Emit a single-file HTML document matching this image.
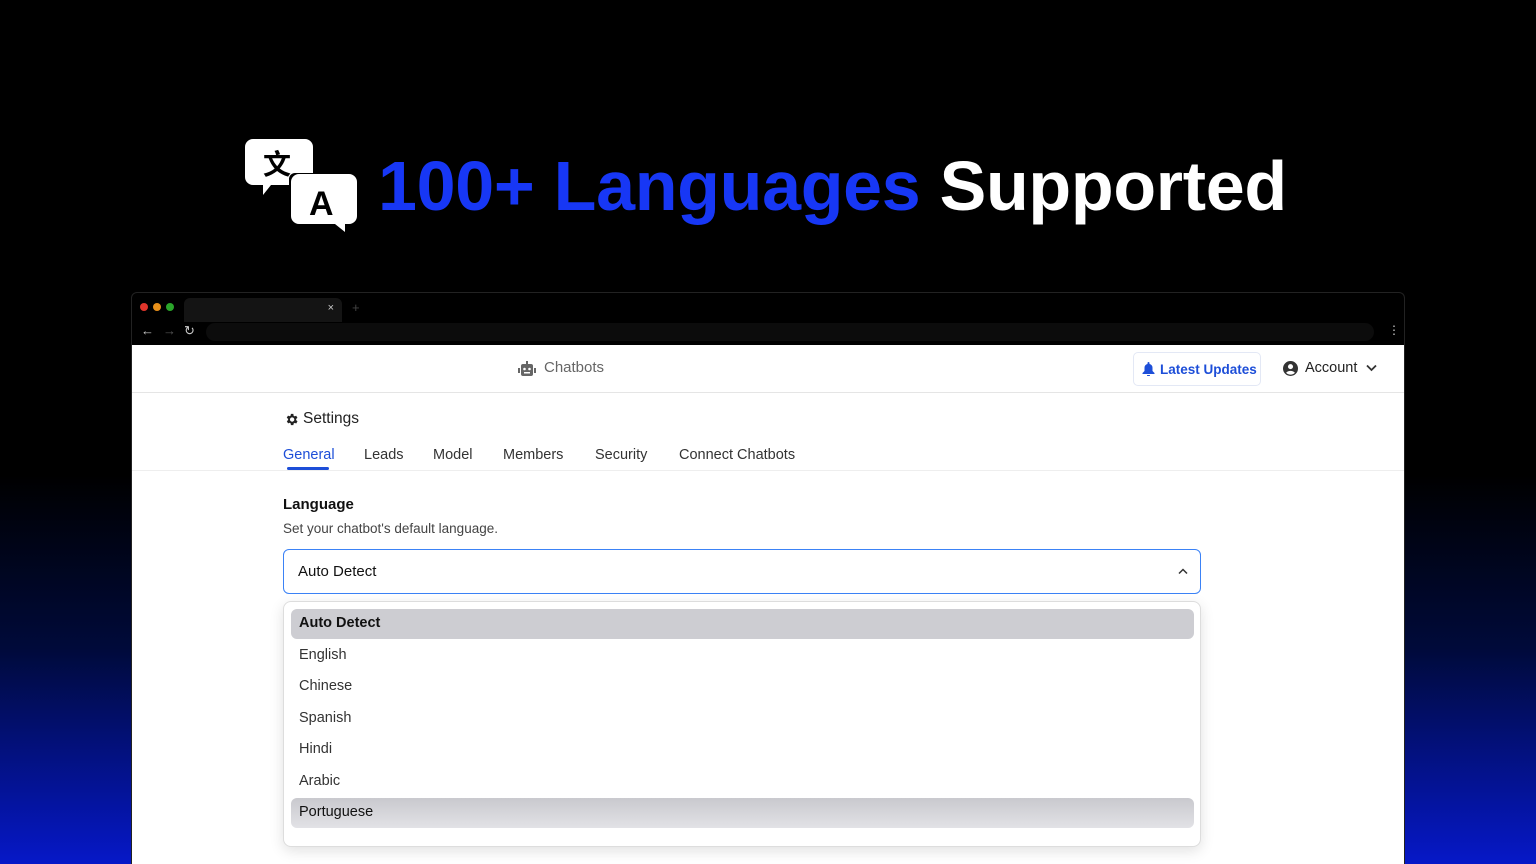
<!DOCTYPE html>
<html><head><style>
*{margin:0;padding:0;box-sizing:border-box}
html,body{width:1536px;height:864px;overflow:hidden}
body{font-family:"Liberation Sans",sans-serif;background:linear-gradient(180deg,#000 0%,#000 55%,#000a3a 75%,#0618c8 100%);position:relative}
.h{position:absolute;left:378px;top:146px;font-size:70px;font-weight:bold;letter-spacing:-0.3px;color:#fff;white-space:nowrap;line-height:80px}
.h b{color:#1737f5}
.win{position:absolute;left:131px;top:292px;width:1274px;height:572px;background:#000;border:1px solid #222;border-bottom:none;border-radius:6px 6px 0 0;overflow:hidden}
.tab{position:absolute;left:52px;top:5px;width:158px;height:24px;background:#141414;border-radius:6px 6px 0 0}
.dot{position:absolute;top:10px;width:8px;height:8px;border-radius:50%}
.addr{position:absolute;left:74px;top:30px;width:1168px;height:18px;background:#0c0c0c;border-radius:9px}
.page{position:absolute;left:0;top:52px;width:1274px;height:530px;background:#fff}
.top{height:48px;border-bottom:1px solid #e5e5e5;position:relative}
.t{position:absolute;font-size:15px;color:#222;white-space:nowrap}
.tabs span{position:absolute;top:102px;font-size:14.5px;color:#333}
.sel{position:absolute;left:151px;top:204px;width:918px;height:45px;border:1.5px solid #3b82f6;border-radius:6px;font-size:15px;color:#111;padding:13px 14px}
.dd{position:absolute;left:151px;top:256px;width:918px;height:246px;border:1px solid #ddd;border-radius:8px;box-shadow:0 4px 14px rgba(0,0,0,.12);background:#fff}
.it{position:absolute;left:7px;width:903px;height:30px;font-size:14.5px;color:#333;padding:6px 8px;border-radius:6px}
</style></head><body>
<svg style="position:absolute;left:245px;top:138px" width="112" height="94" viewBox="0 0 112 94">
<path d="M8 1h52a8 8 0 0 1 8 8v26H50a6 6 0 0 0-6 6v6H26l-8 10v-10H8a8 8 0 0 1-8-8V9a8 8 0 0 1 8-8z" fill="#fff"/>
<text x="18" y="36" font-size="28" font-weight="bold" fill="#000" font-family="Noto Sans CJK SC,sans-serif">文</text>
<path d="M54 36h50a8 8 0 0 1 8 8v34a8 8 0 0 1-8 8h-4v8l-10-8H54a8 8 0 0 1-8-8V44a8 8 0 0 1 8-8z" fill="#fff"/>
<text x="64" y="77" font-size="34" font-weight="bold" fill="#000" font-family="Liberation Sans,sans-serif">A</text>
</svg>
<div class="h"><b>100+ Languages</b> Supported</div>
<div class="win">
<div class="dot" style="left:8px;background:#e0352b"></div><div class="dot" style="left:21px;background:#e8901a"></div><div class="dot" style="left:34px;background:#2aa52a"></div>
<div class="tab"><span style="position:absolute;right:8px;top:4px;color:#ccc;font-size:11px">×</span></div>
<span style="position:absolute;left:220px;top:7px;color:#444;font-size:13px">+</span>
<span style="position:absolute;left:9px;top:30px;color:#ccc;font-size:13px">←</span>
<span style="position:absolute;left:31px;top:30px;color:#555;font-size:13px">→</span>
<span style="position:absolute;left:52px;top:30px;color:#ccc;font-size:13px">↻</span>
<div class="addr"></div>
<span style="position:absolute;left:1256px;top:30px;color:#ccc;font-size:12px">⋮</span>
<div class="page">
<div class="top">
<svg style="position:absolute;left:386px;top:16px" width="18" height="16" viewBox="0 0 18 16"><rect x="3" y="3" width="12" height="12" rx="2" fill="#666"/><rect x="0" y="7" width="2" height="5" fill="#666"/><rect x="16" y="7" width="2" height="5" fill="#666"/><rect x="8" y="0" width="2" height="3" fill="#666"/><circle cx="6.5" cy="8" r="1.3" fill="#fff"/><circle cx="11.5" cy="8" r="1.3" fill="#fff"/><rect x="6" y="11" width="6" height="1.5" fill="#fff"/></svg>
<span class="t" style="left:412px;top:14px;color:#666">Chatbots</span>
<div style="position:absolute;left:1001px;top:7px;width:128px;height:34px;border:1px solid #e3e8f5;border-radius:5px;color:#1d4ed8;font-size:13.5px;font-weight:bold;padding:9px 0 0 26px;white-space:nowrap">Latest Updates
<svg style="position:absolute;left:8px;top:9px" width="13" height="14" viewBox="0 0 13 14"><path d="M6.5 0a1 1 0 0 1 1 1v1a4 4 0 0 1 3 4v3l2 2v1H.5v-1l2-2V6a4 4 0 0 1 3-4V1a1 1 0 0 1 1-1zM5 13h3a1.5 1.5 0 0 1-3 0z" fill="#1d4ed8"/></svg></div>
<svg style="position:absolute;left:1151px;top:16px" width="15" height="15" viewBox="0 0 16 16"><circle cx="8" cy="8" r="8" fill="#333"/><circle cx="8" cy="6" r="2.7" fill="#fff"/><path d="M3.3 12.5a5.5 4 0 0 1 9.4 0A6.5 6.5 0 0 1 3.3 12.5z" fill="#fff"/></svg>
<span class="t" style="left:1173px;top:15px;font-size:14.5px">Account</span>
<svg style="position:absolute;left:1234px;top:19px" width="11" height="8" viewBox="0 0 11 8"><path d="M1 1.5l4.5 4.5 4.5-4.5" stroke="#333" stroke-width="1.8" fill="none"/></svg>
</div>
<svg style="position:absolute;left:152px;top:67px" width="15" height="15" viewBox="0 0 24 24"><path fill="#222" d="M19.4 13a7.6 7.6 0 0 0 0-2l2.1-1.6-2-3.5-2.5 1a7.5 7.5 0 0 0-1.7-1L15 3h-4l-.4 2.7a7.5 7.5 0 0 0-1.7 1l-2.5-1-2 3.5L6.6 11a7.6 7.6 0 0 0 0 2l-2.1 1.6 2 3.5 2.5-1a7.5 7.5 0 0 0 1.7 1L11 21h4l.4-2.7a7.5 7.5 0 0 0 1.7-1l2.5 1 2-3.5zM13 15.5a3.5 3.5 0 1 1 0-7 3.5 3.5 0 0 1 0 7z"/></svg>
<span class="t" style="left:171px;top:65px;font-size:15.5px">Settings</span>
<div class="tabs"><span style="left:151px;color:#1d4ed8">General</span><span style="left:232px">Leads</span><span style="left:301px">Model</span><span style="left:371px">Members</span><span style="left:463px">Security</span><span style="left:547px">Connect Chatbots</span></div>
<div style="position:absolute;left:155px;top:122px;width:42px;height:3px;background:#1d4ed8;border-radius:2px"></div>
<div style="position:absolute;left:0;top:125px;width:1274px;height:1px;background:#eee"></div>
<span class="t" style="left:151px;top:151px;font-weight:bold;color:#111">Language</span>
<span class="t" style="left:151px;top:176px;font-size:13.5px;color:#444">Set your chatbot's default language.</span>
<div class="sel">Auto Detect<svg style="position:absolute;right:12px;top:18px" width="10" height="7" viewBox="0 0 10 7"><path d="M1 5.5l4-4 4 4" stroke="#333" stroke-width="1.5" fill="none"/></svg></div>
<div class="dd">
<div class="it" style="top:7px;background:#cdcdd2;color:#111;font-weight:bold">Auto Detect</div>
<div class="it" style="top:39px">English</div>
<div class="it" style="top:70px">Chinese</div>
<div class="it" style="top:102px">Spanish</div>
<div class="it" style="top:133px">Hindi</div>
<div class="it" style="top:165px">Arabic</div>
<div class="it" style="top:196px;background:linear-gradient(#c9c9ce,#e2e2e6);color:#111">Portuguese</div>
</div>
</div></div>
</body></html>
